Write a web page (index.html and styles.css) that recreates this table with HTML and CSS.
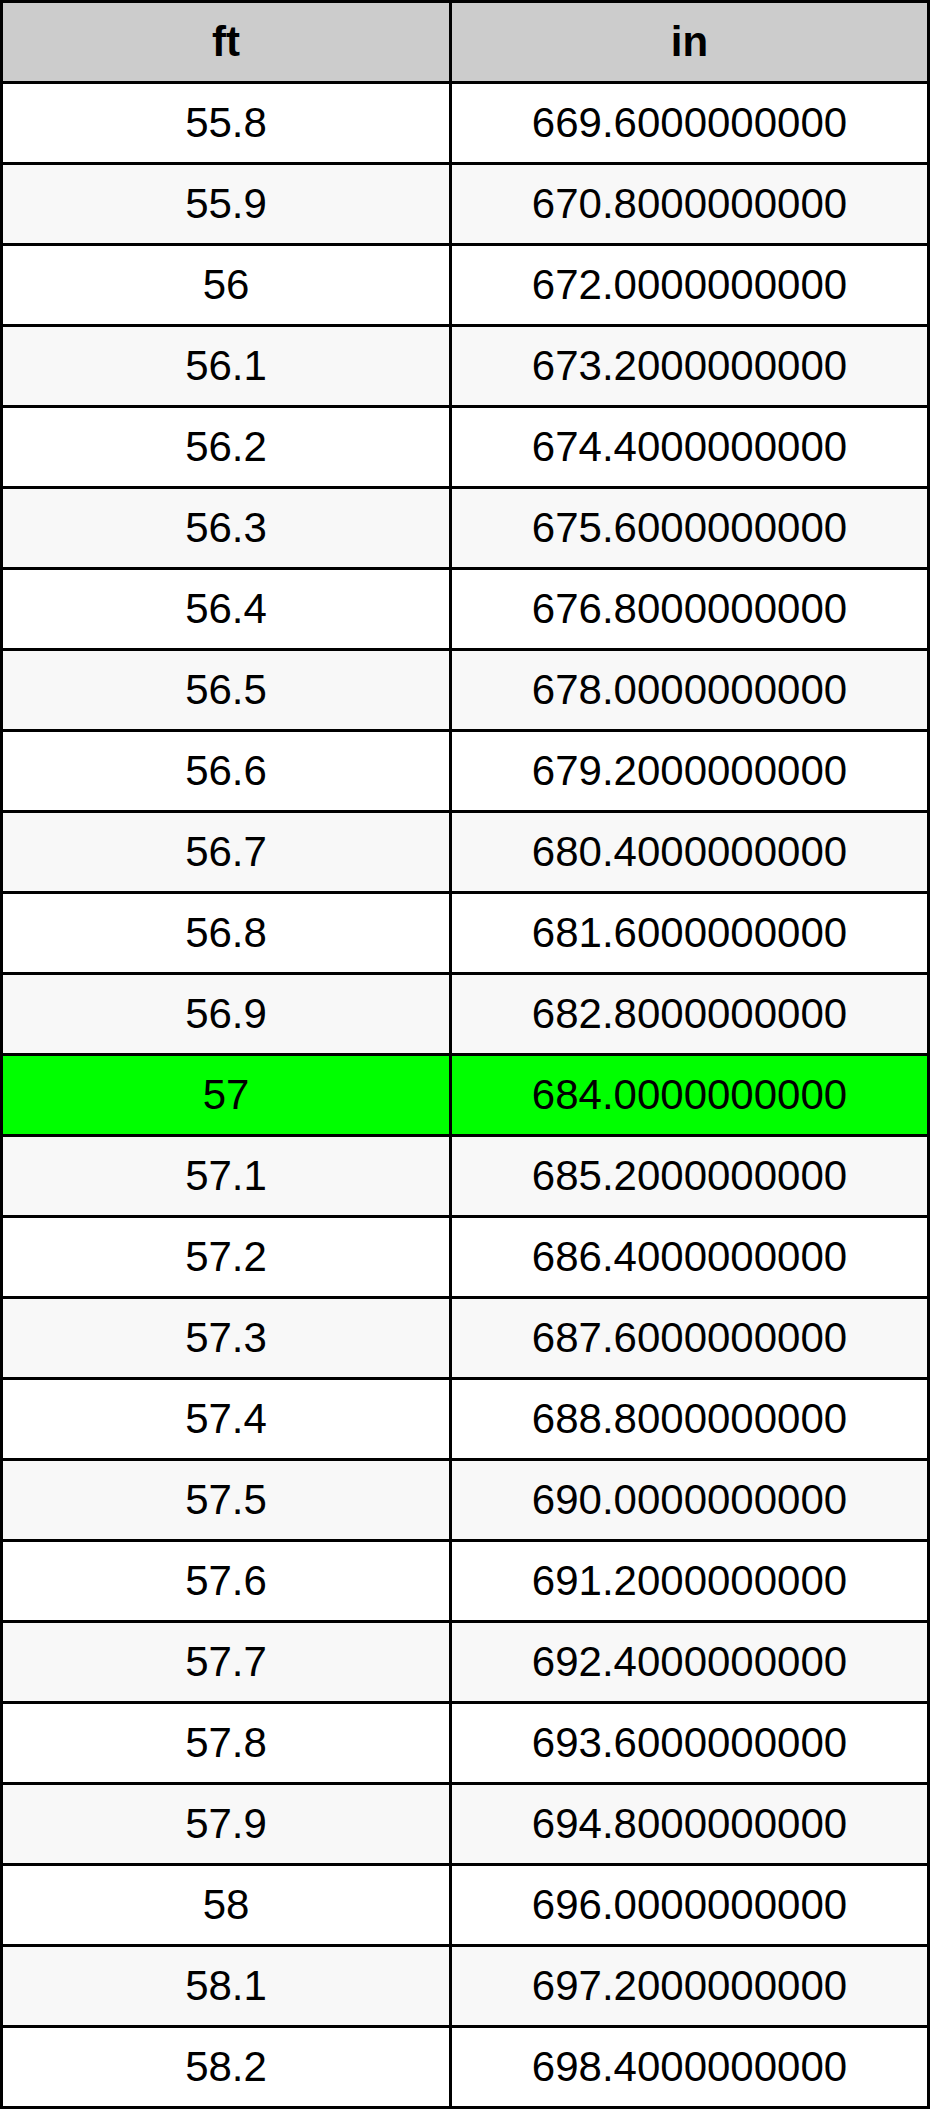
FILE: index.html
```html
<!DOCTYPE html>
<html lang="en">
<head>
<meta charset="utf-8">
<title>ft to in</title>
<link rel="stylesheet" href="styles.css">
</head>
<body>
<table class="conv">
  <thead>
    <tr><th class="col-ft">ft</th><th>in</th></tr>
  </thead>
  <tbody>
    <tr><td>55.8</td><td>669.6000000000</td></tr>
    <tr><td>55.9</td><td>670.8000000000</td></tr>
    <tr><td>56</td><td>672.0000000000</td></tr>
    <tr><td>56.1</td><td>673.2000000000</td></tr>
    <tr><td>56.2</td><td>674.4000000000</td></tr>
    <tr><td>56.3</td><td>675.6000000000</td></tr>
    <tr><td>56.4</td><td>676.8000000000</td></tr>
    <tr><td>56.5</td><td>678.0000000000</td></tr>
    <tr><td>56.6</td><td>679.2000000000</td></tr>
    <tr><td>56.7</td><td>680.4000000000</td></tr>
    <tr><td>56.8</td><td>681.6000000000</td></tr>
    <tr><td>56.9</td><td>682.8000000000</td></tr>
    <tr class="hl"><td>57</td><td>684.0000000000</td></tr>
    <tr><td>57.1</td><td>685.2000000000</td></tr>
    <tr><td>57.2</td><td>686.4000000000</td></tr>
    <tr><td>57.3</td><td>687.6000000000</td></tr>
    <tr><td>57.4</td><td>688.8000000000</td></tr>
    <tr><td>57.5</td><td>690.0000000000</td></tr>
    <tr><td>57.6</td><td>691.2000000000</td></tr>
    <tr><td>57.7</td><td>692.4000000000</td></tr>
    <tr><td>57.8</td><td>693.6000000000</td></tr>
    <tr><td>57.9</td><td>694.8000000000</td></tr>
    <tr><td>58</td><td>696.0000000000</td></tr>
    <tr><td>58.1</td><td>697.2000000000</td></tr>
    <tr><td>58.2</td><td>698.4000000000</td></tr>
  </tbody>
</table>
</body>
</html>
```
FILE: styles.css
```css
html, body {
  margin: 0;
  padding: 0;
  background: #ffffff;
}
body {
  font-family: "Liberation Sans", Arial, sans-serif;
  color: #000000;
}
.conv {
  width: 930px;
  border-collapse: separate;
  border-spacing: 3px;
  background: #000000;
  table-layout: fixed;
}
.conv th,
.conv td {
  height: 78px;
  padding: 0;
  text-align: center;
  vertical-align: middle;
  font-size: 42px;
  line-height: 1;
}
.conv th {
  background: #cccccc;
  font-weight: bold;
}
.conv .col-ft {
  width: 446px;
}
.conv tbody tr:nth-child(odd) td {
  background: #ffffff;
}
.conv tbody tr:nth-child(even) td {
  background: #f8f8f8;
}
.conv tbody tr.hl td {
  background: #00ff00;
}
```
